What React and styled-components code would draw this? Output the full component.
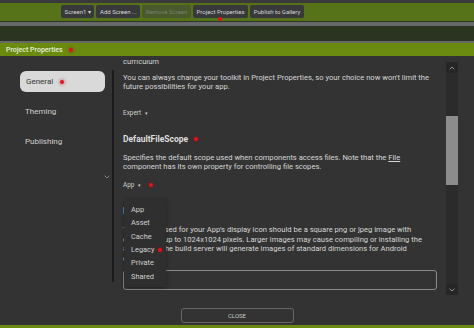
import React, { useLayoutEffect, useRef } from "react";
import styled, { createGlobalStyle } from "styled-components";

const GlobalStyle = createGlobalStyle`
  html, body {
    margin: 0;
    padding: 0;
    background: #333333;
  }
  body {
    font-family: Roboto, "Liberation Sans", sans-serif;
  }
  * {
    box-sizing: border-box;
  }
`;

const toolbarButtons = [
  { id: "screen", label: "Screen1 ▾" },
  { id: "add", label: "Add Screen ..." },
  { id: "remove", label: "Remove Screen", disabled: true },
  { id: "props", label: "Project Properties", marked: true },
  { id: "publish", label: "Publish to Gallery" },
];

const tabs = [
  { id: "general", title: "General" },
  { id: "theming", title: "Theming" },
  { id: "publishing", title: "Publishing" },
];

const scopes = ["App", "Asset", "Cache", "Legacy", "Private", "Shared"];

const Chevron = ({ up }) => (
  <svg width="6" height="4" viewBox="0 0 6 4">
    <path
      d={up ? "M0.6 3.4 L3 1 L5.4 3.4" : "M0.6 0.6 L3 3 L5.4 0.6"}
      fill="none"
      stroke="currentColor"
      strokeWidth="0.9"
    />
  </svg>
);

const App = () => {
  const scrollRef = useRef(null);

  // the properties panel is shown scrolled down a little
  useLayoutEffect(() => {
    if (scrollRef.current) scrollRef.current.scrollTop = 34;
  }, []);

  return (
    <Page>
      <GlobalStyle />
      <TopStrip />
      <Toolbar>
        {toolbarButtons.map((b) => (
          <ToolButton key={b.id} $disabled={b.disabled}>
            {b.label}
            {b.marked && <ToolMark />}
          </ToolButton>
        ))}
      </Toolbar>
      <Band $h={4} />
      <DarkBand />
      <Band $h={2} />
      <DialogHeader>
        Project Properties
        <Dot />
      </DialogHeader>

      <DialogBody>
        <Sidebar>
          {tabs.map((t) => (
            <Tab key={t.id} $active={t.id === "general"}>
              {t.title}
              {t.id === "general" && <Dot />}
            </Tab>
          ))}
          <Collapse>
            <Chevron />
          </Collapse>
        </Sidebar>
        <Divider />

        <ContentWrap>
          <Content ref={scrollRef}>
            <Block>
              <PropTitle>BlocksToolkit</PropTitle>
              <Para>
                Choose a toolkit to restrict the components and blocks to the ones used in your
                <br />
                curriculum
              </Para>
              <Para>
                You can always change your toolkit in Project Properties, so
                your choice now won't limit the future possibilities for your
                app.
              </Para>
              <Picker $top={9}>
                Expert <Caret>▾</Caret>
              </Picker>
            </Block>

            <Block>
              <PropTitle>
                DefaultFileScope
                <Dot />
              </PropTitle>
              <Para>
                Specifies the default scope used when components access files.
                Note that the <u>File</u> component has its own property for
                controlling file scopes.
              </Para>
              <Picker $top={2}>
                App <Caret>▾</Caret>
                <Dot />
              </Picker>
            </Block>

            <Block>
              <PropTitle>Icon</PropTitle>
              <Para>
                The image used for your App's display icon should be a square
                png or jpeg image with dimensions up to 1024x1024 pixels.
                Larger images may cause compiling or installing the app to
                fail. The build server will generate images of standard
                dimensions for Android devices.
              </Para>
              <TextBox />
            </Block>
          </Content>

          <Menu>
            {scopes.map((s) => (
              <MenuItem key={s}>
                {s}
                {s === "Legacy" && <Dot />}
              </MenuItem>
            ))}
          </Menu>
        </ContentWrap>

        <Scrollbar>
          <ScrollArrow>
            <Chevron up />
          </ScrollArrow>
          <ScrollTrack>
            <ScrollThumb />
          </ScrollTrack>
          <ScrollArrow>
            <Chevron />
          </ScrollArrow>
        </Scrollbar>
      </DialogBody>

      <Footer>
        <CloseButton>CLOSE</CloseButton>
      </Footer>
      <BottomBar />
    </Page>
  );
};

const Page = styled.div`
  width: 474px;
  height: 328px;
  display: flex;
  flex-direction: column;
  overflow: hidden;
  background: #333333;
`;

const TopStrip = styled.div`
  height: 3px;
  background: #3a3a3d;
`;

const Toolbar = styled.div`
  height: 19px;
  background: #56731a;
  border-bottom: 1px solid #2f3524;
  display: flex;
  align-items: center;
  gap: 2px;
  padding: 0 0 1px 61px;
`;

const ToolButton = styled.div`
  position: relative;
  height: 13px;
  padding: 0 3.6px;
  display: flex;
  align-items: center;
  border-radius: 2px;
  font-size: 6px;
  color: ${(p) => (p.$disabled ? "#7a7f70" : "#d6d6d6")};
  background: ${(p) => (p.$disabled ? "#4b5a2c" : "#37393a")};
  white-space: nowrap;
`;

const ToolMark = styled.span`
  position: absolute;
  left: 50%;
  bottom: -3px;
  width: 4px;
  height: 4px;
  margin-left: -3px;
  border-radius: 50%;
  background: #e8101a;
`;

const Band = styled.div`
  height: ${(p) => p.$h}px;
  background: #66686a;
`;

const DarkBand = styled.div`
  height: 15px;
  background: #2b3420;
`;

const DialogHeader = styled.div`
  height: 13px;
  background: #6a8b10;
  color: #e6eede;
  font-size: 7px;
  font-weight: 500;
  display: flex;
  align-items: center;
  padding-left: 6px;
`;

const Dot = styled.span`
  display: inline-block;
  width: 4px;
  height: 4px;
  border-radius: 50%;
  background: #e8101a;
  margin-left: 6px;
  box-shadow: 0 0 3px 1px rgba(160, 20, 30, 0.35);
`;

const DialogBody = styled.div`
  flex: 1;
  display: flex;
  min-height: 0;
`;

const Sidebar = styled.div`
  width: 112px;
  display: flex;
  flex-direction: column;
  padding: 15px 6px 0 20px;
`;

const Tab = styled.div`
  height: 21px;
  display: flex;
  align-items: center;
  padding-left: ${(p) => (p.$active ? "6px" : "5px")};
  margin-bottom: 9px;
  border-radius: 6px;
  font-size: 8px;
  color: ${(p) => (p.$active ? "#333" : "#d0d0d0")};
  background: ${(p) => (p.$active ? "#d9d9d9" : "transparent")};
  width: 85px;

  ${Dot} {
    margin-left: 7px;
  }
`;

const Collapse = styled.div`
  align-self: flex-end;
  display: flex;
  margin-top: 14px;
  margin-right: -4px;
  color: #8a8a8a;
`;

const Divider = styled.div`
  width: 2px;
  margin: 14px 0 17px;
  background: #1c1c1c;
`;

const ContentWrap = styled.div`
  position: relative;
  width: 332px;
  display: flex;
  flex-direction: column;
`;

const Content = styled.div`
  height: 236px;
  margin-top: 4px;
  overflow: hidden;
  padding: 0 0 0 9px;
  color: #d6d6d6;
`;

const Block = styled.div`
  display: flex;
  flex-direction: column;
  margin-bottom: 12px;
`;

const Para = styled.p`
  margin: 0 0 6px;
  width: 308px;
  font-size: 7.6px;
  line-height: 9.4px;

  u {
    text-decoration-thickness: 1px;
  }
`;

const Picker = styled.div`
  font-size: 6.4px;
  color: #cfcfcf;
  height: 12px;
  display: flex;
  align-items: center;
  margin-top: ${(p) => p.$top}px;
  white-space: pre;

  ${Dot} {
    margin-left: 8px;
  }
`;

const Caret = styled.span`
  font-size: 5px;
  margin-left: 2px;
`;

const PropTitle = styled.div`
  font-size: 8.5px;
  font-weight: 700;
  color: #dedede;
  height: 16px;
  display: flex;
  align-items: center;
  margin-bottom: 6px;
`;

const TextBox = styled.div`
  width: 314px;
  height: 20px;
  margin-top: 1px;
  border: 1px solid #8a8a8a;
  border-radius: 3px;
`;

const Menu = styled.div`
  position: absolute;
  left: 10px;
  top: 143px;
  width: 42px;
  padding: 4px 0 4px 7px;
  background: #2f2f2f;
  box-shadow: 0 1px 4px rgba(0, 0, 0, 0.35);
  display: flex;
  flex-direction: column;
`;

const MenuItem = styled.div`
  height: 13.3px;
  display: flex;
  align-items: center;
  font-size: 7.4px;
  color: #cfcfcf;

  ${Dot} {
    margin-left: 4px;
  }
`;

const Scrollbar = styled.div`
  width: 12px;
  margin: 6px 0 4px 0;
  display: flex;
  flex-direction: column;
  background: #2b2b2b;
`;

const ScrollArrow = styled.div`
  height: 11px;
  display: flex;
  align-items: center;
  justify-content: center;
  color: #9a9a9a;
  background: #262626;
`;

const ScrollTrack = styled.div`
  flex: 1;
  padding-top: 43px;
`;

const ScrollThumb = styled.div`
  height: 69px;
  background: #8c8c8c;
`;

const Footer = styled.div`
  height: 26px;
  display: flex;
  justify-content: center;
  align-items: flex-end;
  padding-bottom: 2px;
`;

const CloseButton = styled.div`
  width: 113px;
  height: 15px;
  border: 1px solid #666;
  border-radius: 3px;
  display: flex;
  align-items: center;
  justify-content: center;
  font-size: 6px;
  color: #c8c8c8;
`;

const BottomBar = styled.div`
  height: 3px;
  background: #6a8b10;
`;

export default App;
